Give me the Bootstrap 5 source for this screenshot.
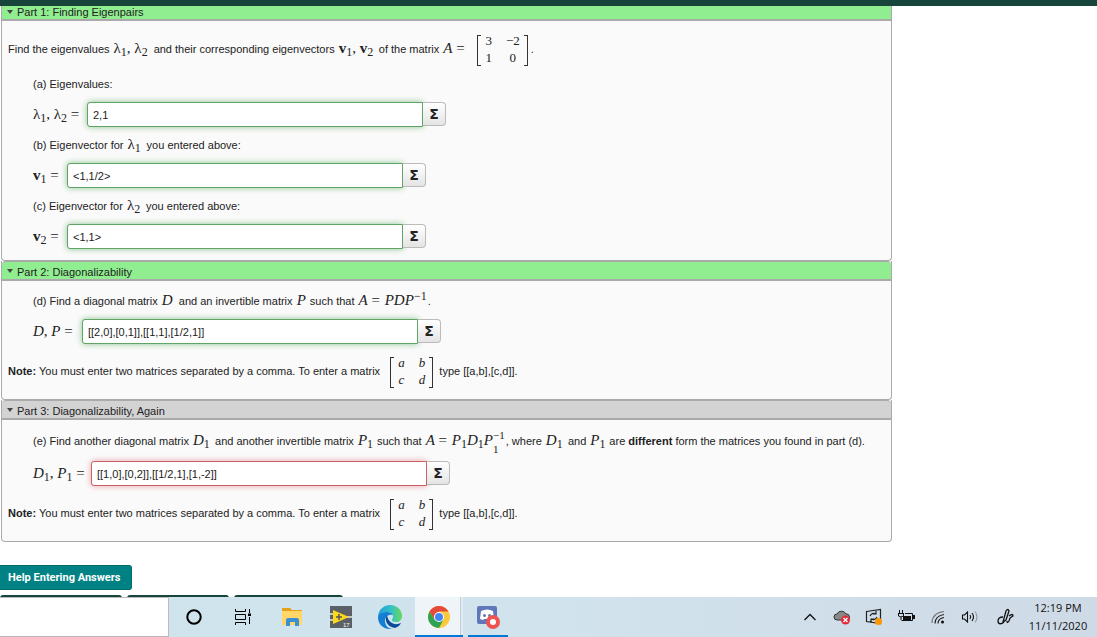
<!DOCTYPE html>
<html lang="en">
<head>
<meta charset="utf-8">
<meta name="viewport" content="width=device-width, initial-scale=1">
<title>Eigenpairs and Diagonalizability</title>
<link href="https://cdn.jsdelivr.net/npm/bootstrap@5.3.0/dist/css/bootstrap.min.css" rel="stylesheet">
<script src="https://cdn.jsdelivr.net/npm/bootstrap@5.3.0/dist/js/bootstrap.bundle.min.js"></script>
<style>
  body { font: 11px/18px "Liberation Sans", Arial, sans-serif; color: #222; background: #fff; }
  .topbar { height: 6px; background: #18453b; }
  .problem { max-width: 891px; margin-left: 1px; }
  .part { border: 1px solid #aaa; border-radius: 0 0 4px 4px; background: #fafafa; }
  .part + .part { border-top: 0; }
  .part:first-child { border-top: 0; }
  .part-head { list-style: none; background: #90ee90; border-bottom: 2px solid #aaa; padding: 0 5px; gap: 3px; height: 20px; }
  .part-head::-webkit-details-marker { display: none; }
  .part + .part .part-head { border-top: 1px solid #aaa; border-radius: 4px 4px 0 0; padding-top: 2px; }
  .part:first-child .part-head { height: 15px; line-height: 13px; }
  .part-head.unsolved { background: #d3d3d3; }
  .part-body { display: flex; flex-direction: column; gap: 9px; padding: 11px 6px; }
  .part-body p { margin: 0; }
  .sub { padding-left: 25px; }
  .sub.scripts { min-height: 21px; line-height: 20px; }
  .tall { line-height: 34px; }
  .note { padding-top: 1px; }
  .math { font: 15px/16px "Liberation Serif", "Times New Roman", serif; display: inline-block; white-space: nowrap; }
  p .math { margin: 0 1px; }
  .math sub, .math sup { font-size: 12px; line-height: 0; }
  .math sub { bottom: -3px; }
  .math sup { top: -5px; }
  .math .stack { display: inline-flex; flex-direction: column; vertical-align: middle; line-height: 14px; font-size: 11px; margin: -8px 0; }
  .rel { margin: 0 1px 0 0; }
  .w-pair { width: 36px; } .w-one { width: 15px; } .w-d { width: 13px; } .w-eq { width: 26px; } .w-sub { width: 18px; }
  .matrix { display: inline-grid; vertical-align: middle; position: relative; height: 31px; margin-left: 4px; padding: 0 7px; border: solid #333; border-width: 0 1px; font: 13px/15px "Liberation Serif", "Times New Roman", serif; grid-template-columns: auto auto; column-gap: 14px; text-align: center; }
  .matrix::before, .matrix::after { content: ""; position: absolute; top: 0; bottom: 0; width: 3px; border: solid #333; border-width: 1px 0; }
  .matrix::before { left: 0; } .matrix::after { right: 0; }
  .matrix span { line-height: 12px; }
  .matrix span:nth-child(n+3) { padding-top: 4px; }
  .answer { display: flex; height: 25px; }
  .answer label { flex: none; line-height: 24px; }
  .l-pair { width: 54px; } .l-one { width: 34px; } .l-dp { width: 49px; } .l-dp1 { width: 58px; }
  .answer .form-control { flex: 0 1 336px; min-height: 0; height: 25px; padding: 0 5px; font-size: 11px; color: #222; border: 1px solid #5fa565; border-radius: 3px 0 0 3px; box-shadow: 0 0 6px #8dc391; }
  .answer .form-control.wrong { border-color: #ca6166; box-shadow: 0 0 6px #e9a3a6; }
  .sigma { height: 24px; width: 23px; padding: 0; border: 1px solid #bbb; border-left: 0; border-radius: 0 4px 4px 0; background: linear-gradient(#fff, #e4e4e4); color: #222; font: bold 14px/20px "DejaVu Sans", sans-serif; }
  .help { height: 25px; margin-top: 23px; padding: 0 11px 0 8px; border: 1px solid #006d6d; border-left: 0; border-radius: 0 3px 3px 0; background: #008284; color: #fff; font: bold 11px/22px Roboto, sans-serif; }
  .tabs { height: 2px; margin-top: 5px; gap: 5px; overflow: hidden; }
  .tabs span { background: #18453b; height: 20px; width: 102px; border-radius: 3px; }
  .tabs span:first-child { width: 122px; }
  .tabs span:last-child { width: 109px; }
  .taskbar { height: 40px; background: linear-gradient(90deg, #cee4ed, #d1e3ec 50%, #cfdae7); color: #111; }
  .search { width: 169px; height: 40px; border: 1px solid #bbb; border-left: 0; background: #fff; border-radius: 0; padding: 0 8px; }
  .app, .tray { border: 0; background: none; padding: 0; height: 40px; display: flex; align-items: center; justify-content: center; }
  .app { width: 49px; }
  .tray { width: 32px; }
  .tray.pen { width: 40px; }
  .app.active { background: linear-gradient(#0078d7, #0078d7) bottom / 100% 2px no-repeat, linear-gradient(90deg, #eef4f8 45px, #c0ced6 45px, #c0ced6 46px, #dfeaf1 46px); width: 48px; margin: 0 0 0 1px; }
  .app.running { background: linear-gradient(#0078d7, #0078d7) bottom / 40px 2px no-repeat; }
  .clock { width: 64px; margin-right: 7px; padding-top: 2px; text-align: center; font: 11px/18px "Open Sans", sans-serif; }
</style>
</head>
<body class="d-flex flex-column min-vh-100">
<div class="topbar"></div>
<main>
  <div class="problem">
    <details class="part" open>
      <summary class="part-head d-flex align-items-center"><svg width="7" height="8" viewBox="0 0 7 8"><path d="M0 1h6L3 5z" fill="#444"/></svg>Part 1: Finding Eigenpairs</summary>
      <div class="part-body">
        <p class="tall">Find the eigenvalues <span class="math w-pair">λ<sub>1</sub>, λ<sub>2</sub></span> and their corresponding eigenvectors <span class="math w-pair"><b>v</b><sub>1</sub>, <b>v</b><sub>2</sub></span> of the matrix <span class="math w-eq"><i>A</i><span class="rel"> =</span></span> <span class="matrix"><span>3</span><span>−2</span><span>1</span><span>0</span></span> .</p>
        <p class="sub">(a) Eigenvalues:</p>
        <div class="sub answer"><label class="math l-pair" for="a1">λ<sub>1</sub>, λ<sub>2</sub><span class="rel"> =</span></label><input class="form-control" id="a1" value="2,1"><button class="sigma" type="button">Σ</button></div>
        <p class="sub">(b) Eigenvector for <span class="math w-one">λ<sub>1</sub></span> you entered above:</p>
        <div class="sub answer"><label class="math l-one" for="a2"><b>v</b><sub>1</sub> =</label><input class="form-control" id="a2" value="&lt;1,1/2&gt;"><button class="sigma" type="button">Σ</button></div>
        <p class="sub">(c) Eigenvector for <span class="math w-one">λ<sub>2</sub></span> you entered above:</p>
        <div class="sub answer"><label class="math l-one" for="a3"><b>v</b><sub>2</sub> =</label><input class="form-control" id="a3" value="&lt;1,1&gt;"><button class="sigma" type="button">Σ</button></div>
      </div>
    </details>
    <details class="part" open>
      <summary class="part-head d-flex align-items-center"><svg width="7" height="8" viewBox="0 0 7 8"><path d="M0 1h6L3 5z" fill="#444"/></svg>Part 2: Diagonalizability</summary>
      <div class="part-body">
        <p class="sub">(d) Find a diagonal matrix <span class="math w-d"><i>D</i></span> and an invertible matrix <span class="math"><i>P</i></span> such that <span class="math"><i>A</i><span class="rel"> = </span><i>PDP</i><sup>−1</sup></span>.</p>
        <div class="sub answer"><label class="math l-dp" for="a4"><i>D</i>, <i>P</i><span class="rel"> =</span></label><input class="form-control" id="a4" value="[[2,0],[0,1]],[[1,1],[1/2,1]]"><button class="sigma" type="button">Σ</button></div>
        <p class="tall note"><b>Note:</b> You must enter two matrices separated by a comma. To enter a matrix &nbsp;<span class="matrix"><span><i>a</i></span><span><i>b</i></span><span><i>c</i></span><span><i>d</i></span></span>&nbsp; type [[a,b],[c,d]].</p>
      </div>
    </details>
    <details class="part" open>
      <summary class="part-head unsolved d-flex align-items-center"><svg width="7" height="8" viewBox="0 0 7 8"><path d="M0 1h6L3 5z" fill="#444"/></svg>Part 3: Diagonalizability, Again</summary>
      <div class="part-body">
        <p class="sub scripts">(e) Find another diagonal matrix <span class="math w-sub"><i>D</i><sub>1</sub></span> and another invertible matrix <span class="math w-one"><i>P</i><sub>1</sub></span> such that <span class="math"><i>A</i><span class="rel"> = </span><i>P</i><sub>1</sub><i>D</i><sub>1</sub><i>P</i><span class="stack"><span>−1</span><span>1</span></span></span>, where <span class="math w-sub"><i>D</i><sub>1</sub></span> and <span class="math w-one"><i>P</i><sub>1</sub></span> are <b>different</b> form the matrices you found in part (d).</p>
        <div class="sub answer"><label class="math l-dp1" for="a5"><i>D</i><sub>1</sub>, <i>P</i><sub>1</sub><span class="rel"> =</span></label><input class="form-control wrong" id="a5" value="[[1,0],[0,2]],[[1/2,1],[1,-2]]"><button class="sigma" type="button">Σ</button></div>
        <p class="tall note"><b>Note:</b> You must enter two matrices separated by a comma. To enter a matrix &nbsp;<span class="matrix"><span><i>a</i></span><span><i>b</i></span><span><i>c</i></span><span><i>d</i></span></span>&nbsp; type [[a,b],[c,d]].</p>
      </div>
    </details>
  </div>
  <button class="help d-block" type="button">Help Entering Answers</button>
  <div class="tabs d-flex"><span></span><span></span><span></span></div>
</main>
<footer class="taskbar d-flex mt-auto">
  <input class="search" type="text" aria-label="Search">
  <button class="app" aria-label="Cortana"><svg width="18" height="18"><circle cx="9" cy="9" r="6.7" fill="none" stroke="#000" stroke-width="2"/></svg></button>
  <button class="app" aria-label="Task View"><svg width="20" height="18" fill="none" stroke="#000"><path d="M2.500 1v2.500h10V1M2.500 17v-2.500h10V17M2.500 6.500h10v5h-10zM16.500 1v4M16.500 9v7"/><path d="M15 5.500h3v2.500h-3z" fill="#000" stroke="none"/></svg></button>
  <button class="app" aria-label="File Explorer"><svg width="22" height="20"><path d="M1 1h8l2 2h10v15H1z" fill="#e4a21a"/><path d="M1 4h20v14H1z" fill="#ffd667"/><path d="M5 19v-6q0-2 2-2h9q2 0 2 2v6h-4v-4H9v4z" fill="#3b8fd5"/></svg></button>
  <button class="app" aria-label="LabVIEW"><svg width="22" height="22"><path d="M0 0h22v22H0z" fill="#5b6067"/><path d="M0 8h4M0 14h4M17 11h5" stroke="#bfc6ca" stroke-width="2"/><path d="M3 4l16 7-16 7z" fill="#ffd819"/><path d="M6 11h6M9 8v6" stroke="#555" stroke-width="1.500"/><text x="13" y="21" font-size="6" fill="#fff">17</text></svg></button>
  <button class="app" aria-label="Edge"><svg width="24" height="24" viewBox="0 0 24 24"><defs><linearGradient id="eg"><stop stop-color="#219fd7"/><stop offset=".55" stop-color="#35c1c8"/><stop offset="1" stop-color="#67d957"/></linearGradient></defs><path d="M0 11C1 4 6 0 12 0c7 0 12 5 12 11 0 4-3 6-6 6-3 0-4-1-4-2l1-3c0-3-2-5-6-5-4 0-8 2-9 5z" fill="url(#eg)"/><path d="M0 12c1-4 5-5 9-5 3 0 5 1 6 3-5-1-8 2-8 6 0 5 4 8 8 8C6 25 0 20 0 12z" fill="#147fd2"/><path d="M9 10c-3 5 0 12 8 13 3-1 5-3 6-5-6 3-13 0-14-8z" fill="#0b4b9b"/></svg></button>
  <button class="app active" aria-label="Chrome"><svg width="22" height="22" viewBox="0 0 22 22"><circle cx="11" cy="11" r="11" fill="#fbc93b"/><path d="M1.500 5.500A11 11 0 0 1 20.500 5.500H11L6.500 13.500z" fill="#e64a3b"/><path d="M1.500 5.500A11 11 0 0 0 11 22l4.500-8.500h-9z" fill="#2fa353"/><circle cx="11" cy="11" r="5" fill="#fff"/><circle cx="11" cy="11" r="4" fill="#4285f4"/></svg></button>
  <button class="app running" aria-label="Discord"><svg width="24" height="24"><rect x="1" y="1" width="20" height="18" rx="2" fill="#6078ba"/><path d="M5 6q6-3 12 0l1 8-3 1-1-1H8l-1 1-3-1z" fill="#fff"/><circle cx="8.500" cy="10.500" r="1.500" fill="#6078ba"/><circle cx="13.500" cy="10.500" r="1.500" fill="#6078ba"/><circle cx="17" cy="17" r="7" fill="#ef5352"/><circle cx="17" cy="17" r="3" fill="#fff"/></svg></button>
  <div class="d-flex ms-auto">
    <button class="tray" aria-label="Show hidden icons"><svg width="14" height="10" fill="none" stroke="#111" stroke-width="1.300"><path d="M1.500 8L7 2.500 12.500 8"/></svg></button>
    <button class="tray" aria-label="OneDrive"><svg width="18" height="16"><path d="M4 11a3 3 0 0 1 0-6 5 5 0 0 1 9 0 3 3 0 0 1 1 6z" fill="#888" stroke="#333"/><circle cx="12.500" cy="11" r="4.500" fill="#e02b3d"/><path d="M10.500 9l4 4m0-4l-4 4" stroke="#fff" stroke-width="1.300"/></svg></button>
    <button class="tray" aria-label="Update"><svg width="18" height="18" fill="none" stroke="#222" stroke-width="1.200"><path d="M1.500 3.500l14-2v14l-14-2zM5 8q2-4 6-2M11 3v3H8M12 9q-2 4-6 2M6 14v-3h3"/><circle cx="13.500" cy="13.500" r="3.500" fill="#ff9800" stroke="none"/></svg></button>
    <button class="tray" aria-label="Battery"><svg width="18" height="14" fill="none" stroke="#111"><path d="M2.500 0v3M5.500 0v3M1 3.500h6M1.500 4v2q2.500 2 5 0V4M4 7v3M8 3.500h7.500v7h-11"/><path d="M6 6h8v4H6zM16 5h2v4h-2z" fill="#111" stroke="none"/></svg></button>
    <button class="tray" aria-label="Wi-Fi"><svg width="16" height="16" fill="none" stroke="#222" stroke-width="1.200"><path d="M2 14Q2 4 14 2.500" stroke="#777"/><path d="M5 14.500Q5 7 14 5.500M8 14.500q0-5 6-6"/><circle cx="12.500" cy="13" r="1.500" fill="#111" stroke="none"/></svg></button>
    <button class="tray" aria-label="Volume"><svg width="18" height="14" fill="none" stroke="#111" stroke-width="1.100"><path d="M1.500 5h2l3-3v10l-3-3h-2zM9 5q1.500 2 0 4M11 3q3 4 0 8"/><path d="M14 1.500q4 5.500 0 11" stroke="#999"/></svg></button>
    <button class="tray pen" aria-label="Ink Workspace"><svg width="18" height="18" fill="none" stroke="#111" stroke-width="1.300"><path d="M6 14L9 3q2-3 3 0l-3 9zM6 9q-5 0-5 4c0 4 4 3 6 1M10 13q0 3 2 0l1-3M12 8q4-3 4 0l-3 2"/></svg></button>
    <div class="clock flex-shrink-0 text-nowrap">12:19 PM<br>11/11/2020</div>
  </div>
</footer>
</body>
</html>
